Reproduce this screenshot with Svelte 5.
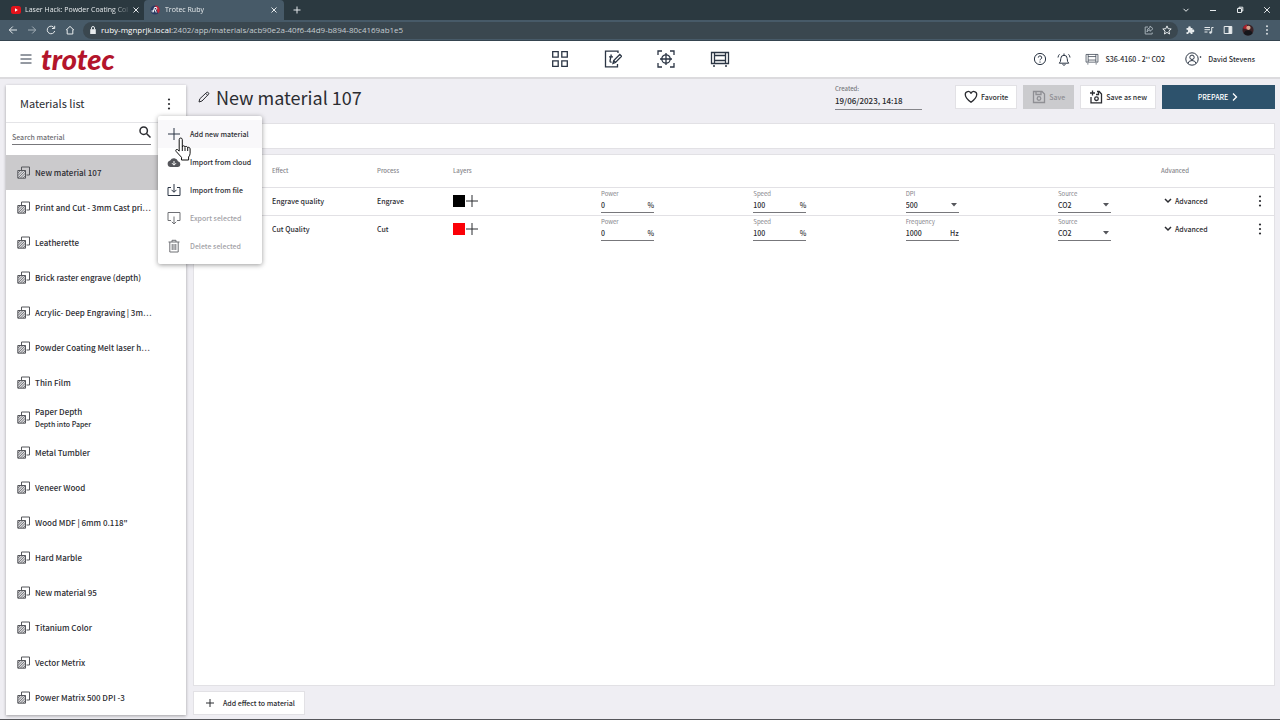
<script lang="ts">
  type Field = {
    label: string;
    value: string;
    unit?: string;
    options?: string[];
  };

  type Effect = {
    id: string;
    name: string;
    process: string;
    layer: string;
    fields: Field[];
  };

  const materials: Array<{ name: string; note?: string }> = [
    { name: 'New material 107' },
    { name: 'Print and Cut - 3mm Cast pri…' },
    { name: 'Leatherette' },
    { name: 'Brick raster engrave (depth)' },
    { name: 'Acrylic- Deep Engraving | 3m…' },
    { name: 'Powder Coating Melt laser h…' },
    { name: 'Thin Film' },
    { name: 'Paper Depth', note: 'Depth into Paper' },
    { name: 'Metal Tumbler' },
    { name: 'Veneer Wood' },
    { name: 'Wood MDF | 6mm 0.118"' },
    { name: 'Hard Marble' },
    { name: 'New material 95' },
    { name: 'Titanium Color' },
    { name: 'Vector Metrix' },
    { name: 'Power Matrix 500 DPI -3' },
  ];

  let effects: Effect[] = [
    {
      id: 'engrave',
      name: 'Engrave quality',
      process: 'Engrave',
      layer: 'black',
      fields: [
        { label: 'Power', value: '0', unit: '%' },
        { label: 'Speed', value: '100', unit: '%' },
        { label: 'DPI', value: '500', options: ['250', '333', '500', '600', '1000'] },
        { label: 'Source', value: 'CO2', options: ['CO2', 'Fiber'] },
      ],
    },
    {
      id: 'cut',
      name: 'Cut Quality',
      process: 'Cut',
      layer: 'red',
      fields: [
        { label: 'Power', value: '0', unit: '%' },
        { label: 'Speed', value: '100', unit: '%' },
        { label: 'Frequency', value: '1000', unit: 'Hz' },
        { label: 'Source', value: 'CO2', options: ['CO2', 'Fiber'] },
      ],
    },
  ];

  const menuItems = [
    { icon: 'plus', label: 'Add new material' },
    { icon: 'cloud', label: 'Import from cloud' },
    { icon: 'import', label: 'Import from file' },
    { icon: 'export', label: 'Export selected', disabled: true },
    { icon: 'trash', label: 'Delete selected', disabled: true },
  ];

  let search = '';
  let selected = 0;
  let menuOpen = true;
  let address = 'ruby-mgnprjk.local:2402/app/materials/acb90e2a-40f6-44d9-b894-80c4169ab1e5';

  $: hostEnd = address.indexOf(':');
</script>

{#snippet dots()}
  <svg class="dots" viewBox="0 0 4 12">
    <circle cx="2" cy="1.5" r="1.1" /><circle cx="2" cy="6" r="1.1" /><circle cx="2" cy="10.5" r="1.1" />
  </svg>
{/snippet}

{#snippet cross()}
  <svg class="cross" viewBox="0 0 8 8"><path d="M1.5 1.5l5 5M6.5 1.5l-5 5" /></svg>
{/snippet}

{#snippet machine()}
  <svg class="line machine" viewBox="0 0 20 18">
    <path d="M1.5 2.5h17v11h-17zM4.5 2.5v11M15.5 2.5v11M4.5 5.5h11M4.5 10.5h11" />
    <path d="M3 16h2M15 16h2" />
  </svg>
{/snippet}

{#snippet menuIcon(name: string)}
  <svg class="line menu-icon" viewBox="0 0 14 14">
    {#if name === 'plus'}
      <path d="M7 1v12M1 7h12" />
    {:else if name === 'cloud'}
      <path class="solid" d="M3.6 12A3.3 3.3 0 0 1 3.2 5.5 4.2 4.2 0 0 1 11 6.3 2.9 2.9 0 0 1 11 12z" />
      <path class="cutout" d="M7 6v4M5 8.2l2 2 2-2" />
    {:else if name === 'import'}
      <path d="M4 4.5H1v8h12v-8h-3M7 1v8M4.5 6.8L7 9.3l2.5-2.5" />
    {:else if name === 'export'}
      <path d="M4 9.5H1v-8h12v8h-3M7 5.5v7.5M4.8 10.8L7 13l2.2-2.2" />
    {:else}
      <path d="M1.5 3h11M5 3V1.3h4V3M2.8 3v10h8.4V3M5.2 5v6M7 5v6M8.8 5v6" />
    {/if}
  </svg>
{/snippet}

<div class="window">
  <div class="tab-strip">
    <div class="tab">
      <svg class="favicon" viewBox="0 0 10 10">
        <rect y="1" width="10" height="8" rx="2.5" fill="#e3131b" />
        <path d="M4 3.3v3.4L6.8 5z" fill="#fff" />
      </svg>
      <span class="tab-title">Laser Hack: Powder Coating Colo</span>
      <button aria-label="Close tab">{@render cross()}</button>
    </div>
    <div class="tab current">
      <svg class="favicon" viewBox="0 0 10 10">
        <circle cx="5" cy="5" r="4.5" fill="#2a3c63" />
        <path d="M5 .5a4.5 4.5 0 0 1 3 8z" fill="#c2283c" />
        <path d="M3 7.5L4.5 2.5h2q1.2 1.2-1 2.3h-1.2M5.4 5l.8 2.5M1.5 6h2" fill="none" stroke="#fff" />
      </svg>
      <span class="tab-title">Trotec Ruby</span>
      <button aria-label="Close tab">{@render cross()}</button>
    </div>
    <button class="new-tab" aria-label="New tab">
      <svg viewBox="0 0 8 8"><path d="M4 .5v7M.5 4h7" /></svg>
    </button>
    <div class="window-controls">
      <button aria-label="Search tabs"><svg viewBox="0 0 8 8"><path d="M1.5 2.8L4 5.3l2.5-2.5" /></svg></button>
      <button aria-label="Minimize"><svg viewBox="0 0 8 8"><path d="M1 4.5h6" /></svg></button>
      <button aria-label="Restore"><svg viewBox="0 0 8 8"><path d="M1.5 2.5h4v4h-4zM3 2.5V1.2h3.8V5H5.5" /></svg></button>
      <button aria-label="Close window"><svg viewBox="0 0 8 8"><path d="M1.2 1.2l5.6 5.6M6.8 1.2L1.2 6.8" /></svg></button>
    </div>
  </div>

  <div class="toolbar">
    <button aria-label="Back"><svg viewBox="0 0 10 10"><path d="M9 5H1.5M4.8 1.5L1.3 5l3.5 3.5" /></svg></button>
    <button class="dim" aria-label="Forward"><svg viewBox="0 0 10 10"><path d="M1 5h7.5M5.2 1.5L8.7 5 5.2 8.5" /></svg></button>
    <button aria-label="Reload"><svg viewBox="0 0 10 10"><path d="M8.3 3A3.8 3.8 0 1 0 8.7 6M8.7.8v2.7H6" /></svg></button>
    <button aria-label="Home"><svg viewBox="0 0 10 10"><path d="M1 5.2L5 1.4l4 3.8M2.2 4.5V9h5.6V4.5" /></svg></button>
    <div class="address">
      <svg class="lock" viewBox="0 0 8 10"><path class="fill" d="M1.2 4.2h5.6V9H1.2z" /><path d="M2.5 4.5V3a1.5 1.5 0 0 1 3 0v1.5" /></svg>
      <span class="url"><b>{address.slice(0, hostEnd)}</b>{address.slice(hostEnd)}</span>
      <button class="dim" aria-label="Share"><svg viewBox="0 0 10 10"><path d="M4 2H1.2v7h7V7.5M6 1l3 2.7-3 2.6V4.8Q3.7 4.8 3 7q0-4 3-4.3z" /></svg></button>
      <button aria-label="Bookmark"><svg viewBox="0 0 10 10"><path d="M5 .9l1.2 2.8 3 .3-2.3 2 .7 3L5 7.4 2.4 9l.7-3L.8 4l3-.3z" /></svg></button>
    </div>
    <button aria-label="Extensions"><svg viewBox="0 0 10 10"><path class="fill" d="M1.5 3H3.3a1.3 1.3 0 1 1 2.4 0H7.5V4.7a1.3 1.3 0 1 1 0 2.4V9H5.7a1.2 1.2 0 1 0-2.3 0H1.5V7.1a1.2 1.2 0 1 0 0-2.3z" /></svg></button>
    <button aria-label="Media"><svg viewBox="0 0 10 10"><path d="M.5 2.5h5.5M.5 4.7h5.5M.5 7h3M9.5 2.5H7.7v5" /><circle class="fill" cx="6.5" cy="7.5" r="1.2" /></svg></button>
    <button aria-label="Side panel"><svg viewBox="0 0 10 10"><path d="M1.2 1.5h7.6v7H1.2z" /><path class="fill" d="M5.5 1.5h3.3v7H5.5z" /></svg></button>
    <button aria-label="Profile">
      <svg class="avatar" viewBox="0 0 14 14">
        <circle cx="7" cy="7" r="6.5" fill="#3a2226" />
        <path d="M1 5a6.5 6.5 0 0 1 5-4.5v6z" fill="#a8222e" />
        <circle cx="7.5" cy="4.5" r="2.5" fill="#d9a48d" />
        <path d="M2 11.2q1-4 5.3-4t5 4Q10 13.5 7 13.5t-5-2.3z" fill="#15161b" />
      </svg>
    </button>
    <button class="browser-menu" aria-label="Browser menu">{@render dots()}</button>
  </div>

  <header class="app-header">
    <div class="brand">
      <button aria-label="Main menu"><svg class="line" viewBox="0 0 12 10"><path d="M.5 1h11M.5 5h11M.5 9h11" /></svg></button>
      <a class="logo" href="#home">trotec</a>
    </div>
    <nav>
      <a href="#dashboard" aria-label="Dashboard">
        <svg class="line" viewBox="0 0 18 18"><path d="M1.7 1.7h5.5v5.5H1.7zM10.8 1.7h5.5v5.5h-5.5zM1.7 10.8h5.5v5.5H1.7zM10.8 10.8h5.5v5.5h-5.5z" /></svg>
      </a>
      <a href="#design" aria-label="Design">
        <svg class="line" viewBox="0 0 18 18">
          <path d="M14 3V1.2H1.5v15.6h12V14" />
          <path d="M7.3 4.5l-1.3 6.5q0 1.5 1.6.8M5 6.8h4" />
          <path d="M9 13.5l.7-3L15.8 4.5l1.8 1.8-6.1 6.2zM9.7 10.5l1.8 2" />
        </svg>
      </a>
      <a href="#prepare" aria-label="Prepare">
        <svg class="line" viewBox="0 0 18 18">
          <path d="M1 5V1h4M13 1h4v4M17 13v4h-4M5 17H1v-4M9 3v12M3 9h12" />
          <circle cx="9" cy="9" r="4.2" />
        </svg>
      </a>
      <a href="#produce" aria-label="Produce">{@render machine()}</a>
    </nav>
    <div class="account">
      <button aria-label="Help">
        <svg class="line" viewBox="0 0 14 14"><circle cx="7" cy="7" r="5.6" /><path d="M5.3 5.6a1.7 1.7 0 1 1 2.5 1.5q-.8.4-.8 1.2M7 9.5v1.2" /></svg>
      </button>
      <button aria-label="Notifications">
        <svg class="line" viewBox="0 0 14 14"><path d="M2.3 11.2q1.5-1.2 1.5-4.7a3.2 3.2 0 0 1 6.4 0q0 3.5 1.5 4.7zM5.5 12.5q1.5 1.5 3 0M7 3.3V1.5M1 5.5q.2-2 1.5-3.2M13 5.5q-.2-2-1.5-3.2" /></svg>
      </button>
      <button class="device">{@render machine()}S36-4160 - 2'' CO2</button>
      <button class="user">
        <svg class="line" viewBox="0 0 18 14">
          <circle cx="8" cy="7" r="6.2" /><circle cx="8" cy="5.3" r="2.2" /><path d="M4 11.5q.5-3 4-3t4 3" /><circle cx="16.5" cy="5" r=".5" />
        </svg>
        David Stevens
      </button>
    </div>
  </header>

  <main>
    <aside class="materials">
      <div class="materials-head">
        <h2>Materials list</h2>
        <button aria-label="Material actions" aria-expanded={menuOpen} on:click={() => (menuOpen = !menuOpen)}>
          {@render dots()}
        </button>
        {#if menuOpen}
          <div class="menu">
            {#each menuItems as item, i}
              <button class:hover={i === 0} disabled={item.disabled}>
                {@render menuIcon(item.icon)}{item.label}
              </button>
            {/each}
            <svg class="pointer" viewBox="0 0 18 24">
              <path d="M4.2 2.6Q4.3 1 5.7 1t1.6 1.6V10q0-1.3 1.3-1.2T10 10.2q.2-1 1.3-.8t1.4 1.4q.2-.8 1.2-.5t1.2 1.5v4.5q0 2-1.5 3.7V23H6.500v-2.7L1.2 14.5Q.3 13.2 1.3 12.5t2.9 1.6z" />
              <path d="M7.3 10v4M10 10.5V14M12.7 11v3" />
            </svg>
          </div>
        {/if}
      </div>
      <label class="search">
        <input type="text" placeholder="Search material" aria-label="Search material" bind:value={search} />
        <svg viewBox="0 0 12 12"><circle cx="4.7" cy="4.7" r="3.7" /><path d="M7.5 7.5l4 4" /></svg>
      </label>
      <ul>
        {#each materials as material, i}
          <li>
            <button class="material" class:selected={i === selected} on:click={() => (selected = i)}>
              <svg class="material-icon" viewBox="0 0 13 13">
                <path d="M4.5 4V1h8v8h-3" />
                <path class="swatch" d="M.8 4.5h7.7v7.7H.8z" />
                <path class="hatch" d="M1 7l2.5-2.5M1 9.5l5-5M1 12l7.5-7.5M3.5 12l5-5M6 12l2.5-2.5" />
              </svg>
              <span class="material-text">
                <span class="material-name">{material.name}</span>
                {#if material.note}
                  <small>{material.note}</small>
                {/if}
              </span>
            </button>
          </li>
        {/each}
      </ul>
    </aside>

    <section class="detail">
      <div class="title-row">
        <h1>
          <svg viewBox="0 0 12 12"><path d="M1 11l.8-3.2L8.8 1.3Q10 .8 10.7 2q.3.8-.2 1.3L4 10zM7.7 2.3l1.9 2" /></svg>
          New material 107
        </h1>
        <label class="created">
          Created:
          <input type="text" value="19/06/2023, 14:18" readonly />
        </label>
        <div class="actions">
          <button>
            <svg viewBox="0 0 14 14"><path d="M7 12.3Q1.3 8 1.3 4.7A2.9 2.9 0 0 1 7 3.7a2.9 2.9 0 0 1 5.7 1Q12.7 8 7 12.3z" /></svg>
            Favorite
          </button>
          <button disabled>
            <svg viewBox="0 0 14 14"><path d="M1.5 1.5h8.5l2.5 2.5v8.5h-11zM4 1.5v3h5v-3" /><circle cx="7" cy="8.5" r="1.8" /></svg>
            Save
          </button>
          <button>
            <svg viewBox="0 0 14 14"><path d="M2 7v5.8h10.5V4l-2.3-2.5H8M9.5 1.5v3H7M3.5.5v5M1 3h5" /><circle cx="7.5" cy="8.7" r="1.8" /></svg>
            Save as new
          </button>
          <button class="primary">
            PREPARE
            <svg viewBox="0 0 8 10"><path d="M2 1.5L5.5 5 2 8.5" /></svg>
          </button>
        </div>
      </div>

      <div class="info-bar"></div>

      <div class="effects">
        <table>
          <colgroup>
            <col class="col-drag" />
            <col class="col-effect" />
            <col class="col-process" />
            <col class="col-layers" />
            <col /><col /><col />
            <col class="col-source" />
            <col class="col-advanced" />
            <col class="col-menu" />
          </colgroup>
          <thead>
            <tr>
              <th></th>
              <th>Effect</th>
              <th>Process</th>
              <th>Layers</th>
              <th></th>
              <th></th>
              <th></th>
              <th></th>
              <th>Advanced</th>
              <th></th>
            </tr>
          </thead>
          <tbody>
            {#each effects as effect}
              <tr>
                <td></td>
                <td>{effect.name}</td>
                <td>{effect.process}</td>
                <td>
                  <div class="layers">
                    <span class="layer {effect.layer}"></span>
                    <button aria-label="Add layer"><svg viewBox="0 0 12 12"><path d="M6 0v12M0 6h12" /></svg></button>
                  </div>
                </td>
                {#each effect.fields as field}
                  <td>
                    <label class="field">
                      <span>{field.label}</span>
                      <div class="control">
                        {#if field.options}
                          <select bind:value={field.value}>
                            {#each field.options as option}
                              <option value={option}>{option}</option>
                            {/each}
                          </select>
                          <svg viewBox="0 0 6 4"><path d="M0 0h6L3 3.5z" /></svg>
                        {:else}
                          <input type="text" bind:value={field.value} />
                          <i>{field.unit}</i>
                        {/if}
                      </div>
                    </label>
                  </td>
                {/each}
                <td>
                  <button class="advanced">
                    <svg viewBox="0 0 8 6"><path d="M1 1l3 3 3-3" /></svg>Advanced
                  </button>
                </td>
                <td><button class="row-menu" aria-label="Effect actions">{@render dots()}</button></td>
              </tr>
            {/each}
          </tbody>
        </table>
      </div>

      <button class="add-effect">
        <svg viewBox="0 0 8 8"><path d="M4 0v8M0 4h8" /></svg>
        Add effect to material
      </button>
    </section>
  </main>
</div>

<style>
  :global(body) {
    margin: 0;
    background: #efeef3;
  }

  .window {
    display: flex;
    flex-direction: column;
    min-height: 100vh;
    box-sizing: border-box;
    border-bottom: 1px solid #55565a;
    font-family: 'Noto Sans CJK SC', 'Noto Sans', sans-serif;
    font-size: 7px;
    font-weight: 500;
    line-height: 12px;
    color: #2b2c31;
  }

  .window :global(*) {
    box-sizing: border-box;
  }

  button,
  input,
  select {
    font: inherit;
    color: inherit;
    border: 0;
    margin: 0;
    padding: 0;
    background: none;
    border-radius: 0;
    outline: none;
  }

  button {
    display: flex;
    align-items: center;
    cursor: pointer;
    white-space: nowrap;
  }

  a {
    color: inherit;
    text-decoration: none;
  }

  svg {
    display: block;
    flex-shrink: 0;
    fill: none;
    stroke: currentColor;
  }

  .dots {
    width: 4px;
    height: 12px;
    fill: currentColor;
    stroke: none;
  }

  .line {
    stroke: #2b3544;
  }

  /* Browser chrome */
  .tab-strip,
  .toolbar {
    display: flex;
    align-items: center;
    color: #e6eaec;
    font-family: 'Open Sans', 'Noto Sans', sans-serif;
    font-weight: 400;
  }

  .tab-strip {
    height: 20px;
    background: #2b3940;
  }

  .tab {
    display: flex;
    align-items: center;
    gap: 5px;
    width: 140px;
    height: 20px;
    padding: 0 6px;
  }

  .tab:first-child {
    width: 144px;
    padding: 0 4px 0 11px;
    gap: 4px;
  }

  .tab.current {
    background: #475a68;
    border-radius: 4px 4px 0 0;
  }

  .favicon {
    width: 10px;
    height: 10px;
    stroke: none;
  }

  .tab-title {
    flex: 1;
    min-width: 0;
    white-space: nowrap;
    mask-image: linear-gradient(to right, #000 85%, #0003);
  }

  .cross,
  .new-tab svg,
  .window-controls svg {
    width: 8px;
    height: 8px;
  }

  .new-tab {
    margin-left: 9px;
  }

  .window-controls {
    display: flex;
    gap: 19px;
    margin-left: auto;
    padding-right: 9px;
  }

  .toolbar {
    height: 21px;
    gap: 9px;
    padding: 0 9px 0 8px;
    background: #475a68;
    border-bottom: 1px solid #35444f;
  }

  .toolbar svg {
    width: 10px;
    height: 10px;
  }

  .toolbar .fill {
    fill: currentColor;
    stroke: none;
  }

  .toolbar .dim {
    color: #a3aeb6;
  }

  .toolbar .avatar {
    width: 12px;
    height: 12px;
    stroke: none;
  }

  .toolbar .dots {
    width: 8px;
  }

  .address {
    flex: 1;
    display: flex;
    align-items: center;
    gap: 8px;
    height: 17px;
    margin: 0 -2px 0 -1px;
    padding: 0 6px;
    border-radius: 9px;
    background: #3a474f;
  }

  .address .lock {
    width: 8px;
    margin-right: -4px;
  }

  .url {
    flex: 1;
    font-size: 8px;
    color: #c5ccd0;
  }

  .url b {
    font-weight: 400;
    color: #fff;
  }

  /* App header */
  .app-header {
    display: grid;
    grid-template-columns: 1fr auto 1fr;
    align-items: center;
    height: 38px;
    background: #fff;
    border-bottom: 2px solid #dcdbde;
  }

  .brand {
    display: flex;
    align-items: center;
    gap: 9px;
    padding-left: 20px;
  }

  .brand svg {
    width: 12px;
    height: 10px;
  }

  .logo {
    font: italic 900 29px/30px Lato, sans-serif;
    color: #b3152b;
  }

  nav {
    display: flex;
    gap: 35px;
  }

  nav svg {
    width: 18px;
    height: 18px;
    stroke-width: 1.3;
  }

  nav .machine {
    width: 20px;
  }

  .account {
    display: flex;
    align-items: center;
    justify-content: flex-end;
    gap: 10px;
    padding-right: 25px;
  }

  .account svg {
    width: 14px;
    height: 14px;
  }

  .device,
  .user {
    gap: 6px;
  }

  .device {
    margin-left: 4px;
  }

  .user {
    margin-left: 9px;
  }

  .account .user svg {
    width: 18px;
  }

  /* Page */
  main {
    flex: 1;
    display: flex;
    gap: 7px;
    padding: 6px 5px 4px 6px;
    background: #efeef3;
  }

  .materials {
    flex: 0 0 180px;
    min-width: 0;
    background: #fff;
    box-shadow: 0 1px 3px #0005;
  }

  .materials-head {
    position: relative;
    display: flex;
    align-items: center;
    justify-content: space-between;
    height: 38px;
    padding: 0 15px 0 14px;
    border-bottom: 1px solid #e4e4e7;
  }

  h1,
  h2 {
    margin: 0;
    font-weight: 400;
  }

  h2 {
    padding-bottom: 2px;
    font-size: 11px;
    line-height: 16px;
  }

  .search {
    display: flex;
    align-items: center;
    height: 22px;
    margin: 0 35px 10px 6px;
    border-bottom: 1px solid #77777b;
  }

  .search input {
    flex: 1;
    min-width: 0;
    height: 14px;
    margin-top: 6px;
  }

  .search input::placeholder {
    color: #707075;
    opacity: 1;
  }

  .search svg {
    width: 12px;
    height: 12px;
    margin-bottom: 4px;
    stroke-width: 1.5;
  }

  ul {
    margin: 0;
    padding: 0;
    list-style: none;
  }

  .material {
    width: 100%;
    height: 35px;
    gap: 5px;
    padding: 0 11px;
    text-align: left;
  }

  .material.selected {
    background: #cbcacc;
  }

  .material-icon {
    width: 13px;
    height: 13px;
    stroke: #55565b;
  }

  .material-icon .swatch {
    fill: #d8d8da;
  }

  .material-icon .hatch {
    stroke-width: 0.7;
  }

  .material-text {
    display: flex;
    flex-direction: column;
  }

  .material-name {
    font-size: 8px;
  }

  small {
    font-size: 7px;
  }

  /* Material actions menu */
  .menu {
    position: absolute;
    top: 31px;
    left: 152px;
    z-index: 2;
    width: 104px;
    padding: 4px 0;
    background: #fff;
    border-radius: 2px;
    box-shadow: 0 1px 5px #0006;
  }

  .menu button {
    width: 100%;
    height: 28px;
    gap: 9px;
    padding-left: 9px;
  }

  .menu .hover {
    background: #f9f8fa;
  }

  .menu button:disabled {
    color: #a3a3a7;
  }

  .menu button:disabled svg {
    stroke: #6f7075;
  }

  .menu-icon {
    width: 14px;
    height: 14px;
  }

  .menu-icon .solid {
    fill: #55565b;
    stroke: none;
  }

  .menu-icon .cutout {
    stroke: #fff;
  }

  .pointer {
    position: absolute;
    top: 21px;
    left: 17px;
    width: 18px;
    height: 24px;
    fill: #fff;
    stroke: #111;
    pointer-events: none;
  }

  /* Material detail */
  .detail {
    flex: 1;
    min-width: 0;
    display: flex;
    flex-direction: column;
  }

  .title-row {
    display: flex;
    align-items: center;
    height: 24px;
    margin-bottom: 14px;
  }

  h1 {
    flex: 1;
    display: flex;
    align-items: center;
    gap: 6px;
    padding-left: 5px;
    font-size: 18px;
    line-height: 22px;
  }

  h1 svg {
    width: 12px;
    height: 12px;
  }

  .created {
    width: 87px;
    margin-right: 33px;
    font-size: 6px;
    line-height: 8px;
    color: #77777c;
  }

  .created input {
    display: block;
    width: 100%;
    height: 17px;
    border-bottom: 1px solid #85858a;
    font-size: 8px;
    color: #26272b;
  }

  .actions {
    display: flex;
    gap: 6px;
  }

  .actions button {
    height: 24px;
    gap: 3px;
    padding: 0 8px;
    background: #fff;
    border: 1px solid #e2e1e5;
  }

  .actions svg {
    width: 14px;
    height: 14px;
    stroke-width: 1.3;
  }

  .actions button:disabled {
    background: #cbcbce;
    border-color: #cbcbce;
    color: #8f8f94;
  }

  .actions .primary {
    justify-content: center;
    width: 113px;
    background: #2d526c;
    border-color: #2d526c;
    color: #fff;
  }

  .actions .primary svg {
    width: 8px;
    height: 10px;
  }

  .info-bar {
    height: 26px;
    margin-bottom: 5px;
    background: #fff;
    border: 1px solid #e2e1e5;
  }

  .effects {
    flex: 1;
    background: #fff;
    border: 1px solid #e2e1e5;
  }

  table {
    width: 100%;
    table-layout: fixed;
    border-collapse: collapse;
  }

  .col-drag {
    width: 78px;
  }

  .col-effect {
    width: 105px;
  }

  .col-process {
    width: 76px;
  }

  .col-layers {
    width: 148px;
  }

  .col-source {
    width: 103px;
  }

  .col-advanced {
    width: 97px;
  }

  .col-menu {
    width: 16px;
  }

  th,
  td {
    height: 28px;
    padding: 0;
    text-align: left;
    font-weight: 500;
  }

  th {
    height: 32px;
    font-size: 6px;
    color: #85858a;
  }

  tbody tr {
    border-top: 1px solid #e2e1e5;
  }

  .layers {
    display: flex;
    align-items: center;
    gap: 1px;
  }

  .layer {
    width: 12px;
    height: 12px;
  }

  .layer.black {
    background: #000;
  }

  .layer.red {
    background: #fb0007;
  }

  .layers svg {
    width: 12px;
    height: 12px;
  }

  .field {
    display: block;
    width: 53px;
  }

  .field span {
    display: block;
    font-size: 6px;
    font-weight: 400;
    line-height: 8px;
    color: #85858a;
  }

  .control {
    display: flex;
    align-items: center;
    height: 15px;
    border-bottom: 1px solid #77777b;
  }

  .control input,
  .control select {
    flex: 1;
    min-width: 0;
    height: 12px;
    appearance: none;
  }

  .control i {
    font-style: normal;
  }

  .control svg {
    width: 6px;
    height: 4px;
    margin-right: 2px;
    fill: #55565b;
    stroke: none;
  }

  .advanced {
    gap: 3px;
    padding-left: 3px;
  }

  .advanced svg {
    width: 8px;
    height: 6px;
    stroke-width: 1.5;
  }

  .add-effect {
    align-self: flex-start;
    height: 24px;
    gap: 9px;
    margin-top: 5px;
    padding: 0 9px 0 12px;
    background: #fff;
    border: 1px solid #e2e1e5;
  }

  .add-effect svg {
    width: 8px;
    height: 8px;
  }
</style>
